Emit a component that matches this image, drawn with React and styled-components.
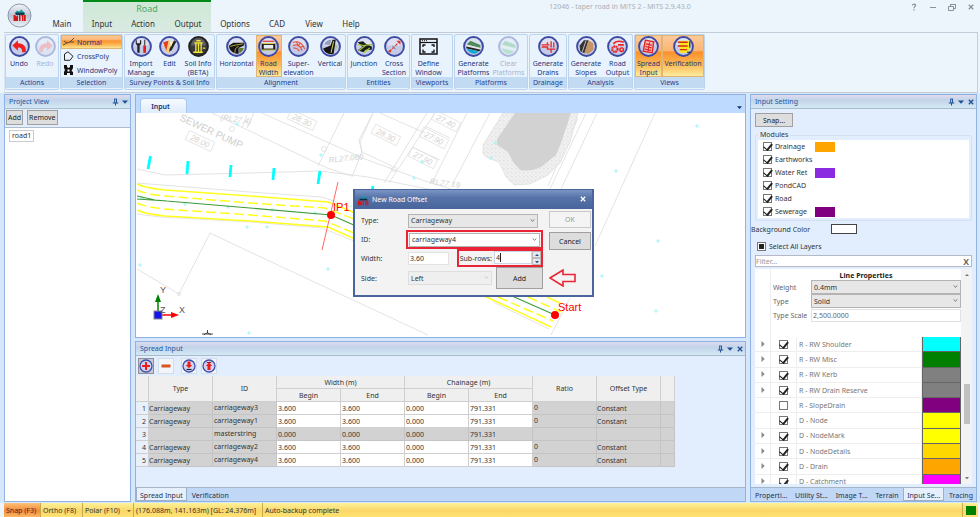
import React, { useState } from 'react';
import styled, { createGlobalStyle, css } from 'styled-components';

const GlobalStyle = createGlobalStyle`
  * {
    box-sizing: border-box;
  }
  body {
    margin: 0;
    font-family: 'Noto Sans', 'Open Sans', sans-serif;
    font-size: 7px;
    line-height: 9px;
    color: #333;
    background: #ecf4fc;
  }
  button, input, select {
    font: inherit;
    color: inherit;
    margin: 0;
    padding: 0;
    border-radius: 0;
    outline: none;
  }
  button {
    border: none;
    background: none;
  }
`;

const Page = styled.div`
  display: flex;
  flex-direction: column;
  height: 100vh;
  overflow: hidden;
`;

/* ---------- header ---------- */

const Header = styled.header`
  display: flex;
  align-items: flex-end;
  height: 32px;
  flex: none;
`;

const LogoButton = styled.button`
  width: 41px;
  height: 30px;
  padding: 1px 0 0 7px;
  align-self: flex-start;
  text-align: left;
  line-height: 0;
`;

const MenuTab = styled.button`
  width: ${p => p.$w}px;
  height: 17px;
  font-size: 8px;
  line-height: 15px;
  color: #333;
`;

const ContextTabs = styled.div`
  height: 32px;
  border-top: 2px solid #008a17;
  background: linear-gradient(#cfe8d6, #d9eae2);
  display: flex;
  flex-direction: column;
  justify-content: space-between;
`;

const ContextRow = styled.div`
  display: flex;
`;

const ContextTitle = styled.div`
  font-size: 9px;
  line-height: 13px;
  text-align: center;
  color: #4fa866;
`;

const TitleText = styled.div`
  flex: 1;
  align-self: flex-start;
  text-align: center;
  color: #adb0b4;
  line-height: 13px;
`;

const WindowControls = styled.div`
  display: flex;
  align-self: flex-start;
  margin-left: 33px;
`;

const WindowButton = styled.button`
  width: 19px;
  height: 14px;
  line-height: 0;
`;

/* ---------- ribbon ---------- */

const Ribbon = styled.nav`
  flex: none;
  display: flex;
  gap: 1px;
  margin: 0 2px 0 4px;
  padding: 1px 0 2px;
  border: 1px solid #c3ccd8;
  border-left-color: #dbe4ef;
  background: #ecf4fc;
  height: 61px;
`;

const Group = styled.section`
  width: ${p => p.$w}px;
  display: flex;
  flex-direction: column;
  border: 1px solid #bcd4ee;
  border-radius: 2px;
  background: #e9f3fd;
  padding-bottom: 1px;
`;

const GroupBody = styled.div`
  flex: 1;
  display: flex;
  justify-content: ${p => (p.$start ? 'flex-start' : 'center')};
`;

const GroupCaption = styled.div`
  height: 11px;
  line-height: 11px;
  background: #c2dbf3;
  color: #26418f;
  text-align: center;
  white-space: nowrap;
`;

const hot = css`
  background: linear-gradient(#fbcb9c, #fbb573 38%, #f98f2b 40%, #fcb954 70%, #fff0a4);
  box-shadow: inset 0 0 0 1px #dcb577;
`;

const ToolButton = styled.button`
  width: ${p => p.$w}px;
  display: flex;
  flex-direction: column;
  align-items: center;
  color: #24357a;
  white-space: pre;
  padding-top: 1px;
  line-height: 9px;
  opacity: ${p => (p.disabled ? 0.35 : 1)};
  ${p => p.$active && hot}

  svg {
    flex: none;
    margin-bottom: 2px;
  }
`;

const SelectionList = styled.div`
  flex: 1;
  display: flex;
  flex-direction: column;
`;

const SelectionButton = styled.button`
  height: 14px;
  display: flex;
  align-items: center;
  gap: 3px;
  padding-left: 2px;
  color: #24357a;
  ${p => p.$active && hot}
`;

/* ---------- workspace ---------- */

const Workspace = styled.main`
  flex: 1;
  min-height: 0;
  display: grid;
  grid-template-columns: 127px minmax(0, 1fr) 227px;
  gap: 4px;
  padding: 1px 3px 1px 4px;
  background: #d6e7fb;
`;

const Panel = styled.section`
  display: flex;
  flex-direction: column;
  min-height: 0;
  border: 1px solid #8db2e3;
  background: #e2eefe;
`;

const PanelHeader = styled.header`
  flex: none;
  display: flex;
  align-items: center;
  height: 14px;
  padding: 0 0 0 4px;
  color: #2259a5;
  background: linear-gradient(#dcdcf0, #c3d3e9 40%, #d3e9f5);
  border-bottom: 1px solid #a9bccb;

  h2 {
    flex: 1;
    margin: 0;
    font-size: 7px;
    font-weight: normal;
  }
`;

const HeaderButton = styled.button`
  width: 10px;
  height: 12px;
  line-height: 0;
`;

const PlainButton = styled.button`
  height: ${p => p.$h || 15}px;
  padding: 0 ${p => p.$pad || 1}px;
  background: #ddd;
  border: 1px solid #a0a0a0;
  color: #222;

  &:disabled {
    background: #f4f4f4;
    border-color: #c9c9c9;
    color: #999;
  }
`;

const ProjectTools = styled.div`
  display: flex;
  gap: 4px;
  padding: 1px 1px 2px;
  border-bottom: 1px solid #b0bccb;
`;

const ProjectTree = styled.div`
  flex: 1;
  background: #fff;
  padding: 2px 4px;
`;

const TreeItem = styled.span`
  display: inline-block;
  border: 1px solid #ccc;
  padding: 0 2px;
  line-height: 10px;
`;

const Center = styled.div`
  display: grid;
  grid-template-rows: minmax(0, 1fr) 161px;
  gap: 3px;
  min-height: 0;
`;

const DocumentPanel = styled(Panel)`
  background: #bfdaff;
`;

const DocumentTabs = styled.div`
  flex: none;
  display: flex;
  align-items: flex-end;
  justify-content: space-between;
  height: 18px;
  padding: 0 1px 0 4px;
`;

const DocumentTab = styled.button`
  width: 47px;
  height: 15px;
  padding-right: 6px;
  font-weight: 600;
  color: #1d2f74;
  background: linear-gradient(#f6faff, #dfecfc);
  border: 1px solid #a9c6ee;
  border-bottom: none;
  border-radius: 4px 4px 0 0;
`;

const Canvas = styled.div`
  position: relative;
  flex: 1;
  min-height: 0;
  background: #fff;
  overflow: hidden;

  > svg {
    display: block;
    width: 100%;
    height: 100%;
  }
`;

/* ---------- dialog ---------- */

const Dialog = styled.form`
  position: absolute;
  left: 217px;
  top: 76px;
  width: 241px;
  border: 2px solid #48659c;
  border-top-width: 1px;
  background: #f3f3f3;
`;

const DialogTitle = styled.div`
  display: flex;
  align-items: center;
  gap: 3px;
  height: 19px;
  padding: 0 6px 0 2px;
  color: #fff;
  background: linear-gradient(#7b95c6, #5673a8 40%, #47659b);

  span {
    flex: 1;
  }
`;

const DialogBody = styled.div`
  display: grid;
  grid-template-columns: 1fr 42px;
  gap: 6px;
  padding: 2px 1px 6px 6px;
`;

const Fields = styled.div`
  display: grid;
  grid-template-columns: 45px 1fr;
  grid-template-rows: 19px 19px 18px 22px;
  align-items: center;
`;

const Marked = styled.div`
  height: 100%;
  display: flex;
  align-items: center;
  border: 2px solid #ea2434;
  padding: ${p => p.$pad || 0};
`;

const FieldRow = styled.div`
  height: 100%;
  display: flex;
  align-items: center;
  justify-content: space-between;
  padding-left: 2px;
`;

const SelectBox = styled.span`
  position: relative;
  display: block;
  width: ${p => p.$w || '100%'};

  select {
    appearance: none;
    display: block;
    width: 100%;
    height: 14px;
    padding-left: 2px;
    background: ${p => p.$bg || '#e7e7e7'};
    border: 1px solid ${p => p.$line || '#b4b4b4'};
    opacity: 1;
    color: #333;
  }
  svg {
    position: absolute;
    right: 3px;
    top: 4px;
    pointer-events: none;
  }
`;

const TextInput = styled.input`
  width: ${p => p.$w || '100%'};
  height: 13px;
  padding-left: 1px;
  border: 1px solid ${p => p.$line || '#e2e2e2'};
  background: #fff;
`;

const Spinner = styled.div`
  position: relative;
  display: flex;
  flex: 1;
  height: 14px;
  margin-left: 2px;
`;

const Caret = styled.span`
  position: absolute;
  left: 6px;
  top: 2px;
  width: 1px;
  height: 9px;
  background: #222;
`;

const Steps = styled.div`
  display: flex;
  flex-direction: column;
  width: 9px;

  button {
    height: 7px;
    line-height: 0;
    background: #e8e8e8;
    border: 1px solid #bbb;
  }
`;

const DialogActions = styled.div`
  display: flex;
  flex-direction: column;
  gap: 4px;

  svg {
    margin-top: 15px;
  }
`;

/* ---------- spread input ---------- */

const SpreadTools = styled.div`
  display: flex;
  gap: 4px;
  padding: 2px;

  button:nth-child(3) {
    margin-left: 3px;
  }
`;

const SpreadTool = styled.button`
  width: 16px;
  height: 16px;
  line-height: 0;
  border: 1px solid ${p => (p.$active ? '#8e9099' : '#d3dcea')};
  background: ${p => (p.$active ? '#c6cad6' : '#f1f4f9')};
`;

const SpreadTable = styled.table`
  table-layout: fixed;
  width: 539px;
  border-collapse: separate;
  border-spacing: 0;
  margin-bottom: auto;

  tr {
    height: 13px;
  }
  th, td {
    height: 13px;
    padding: 0;
    border-right: 1px solid #cfcfcf;
    border-bottom: 1px solid #cfcfcf;
    overflow: hidden;
    line-height: 9px;
  }
  th {
    font-weight: normal;
    background: #efefef;
  }
  td {
    background: #fff;
    padding-left: 1px;
  }
`;

const LockedCell = styled.td`
  && {
    background: #d2d2d2;
    border-color: #c4c4c4;
    padding-left: ${p => (p.$flush ? 0 : 1)}px;
    padding-bottom: ${p => (p.$raised ? 2 : 0)}px;
  }
`;

const RowNumber = styled.th`
  && {
    background: #e8f0fb;
    text-align: right;
    padding-right: 2px;
  }
`;

const BottomTabs = styled.div`
  flex: none;
  display: flex;
  height: 14px;
  padding-left: ${p => p.$pad || 0}px;
  background: #c1d7f6;
  border-top: 1px solid #a5b4c6;
  justify-content: ${p => (p.$spread ? 'space-between' : 'flex-start')};
`;

const BottomTab = styled.button`
  padding: 2px ${p => p.$pad || 3}px 0;
  color: #26324f;
  white-space: nowrap;
  ${p => p.$active && css`
    background: #e6effc;
    border: 1px solid #9db0c8;
    border-top: none;
  `}
`;

/* ---------- input setting ---------- */

const SettingBody = styled.div`
  flex: 1;
  min-height: 0;
  display: flex;
  flex-direction: column;
  padding: 4px 4px 3px;
`;

const Modules = styled.fieldset`
  min-width: 0;
  margin: 3px 0 0;
  padding: 0 2px 2px;
  border: 1px solid #d3e0f2;
  border-radius: 2px;

  legend {
    padding: 0 2px;
    line-height: 10px;
  }
`;

const ModuleList = styled.div`
  background: #fff;
  padding-left: 5px;
`;

const ModuleRow = styled.div`
  display: flex;
  align-items: center;
  height: 13px;

  label {
    width: 52px;
    display: flex;
    align-items: center;
    gap: 3px;
  }
`;

const Swatch = styled.span`
  width: 20px;
  height: 10px;
  background: ${p => p.$color};
`;

const CheckInput = styled.input`
  appearance: none;
  flex: none;
  display: inline-block;
  vertical-align: middle;
  width: 9px;
  height: 9px;
  border: 1px solid #777;
  background: #fff;
  position: relative;

  &:checked::after {
    content: '';
    position: absolute;
    left: 1px;
    top: -1px;
    width: 4px;
    height: 7px;
    border: solid #222;
    border-width: 0 2px 1px 0;
    transform: rotate(40deg);
  }
  &[data-mixed='true']::after {
    content: '';
    position: absolute;
    inset: 1px;
    background: #222;
  }
`;

const BackgroundRow = styled.div`
  display: flex;
  align-items: center;
  height: 16px;
  margin-left: -4px;

  label {
    width: 80px;
  }
  input {
    appearance: none;
    width: 26px;
    height: 10px;
    border: 1px solid #444;
    background: #fff;
  }
  input::-webkit-color-swatch-wrapper {
    padding: 0;
  }
  input::-webkit-color-swatch {
    border: none;
    border-radius: 0;
  }
`;

const SelectAll = styled.label`
  display: flex;
  align-items: center;
  gap: 3px;
  height: 18px;
  padding-left: 2px;
`;

const FilterBox = styled.div`
  display: flex;
  align-items: center;
  flex: none;
  height: 12px;
  border: 1px solid #b3bac4;
  background: #fff;
  margin-bottom: 2px;

  input {
    flex: 1;
    min-width: 0;
    height: 10px;
    border: none;
    background: none;
  }
  input::placeholder {
    color: #999;
  }
  button {
    width: 10px;
    font-size: 9px;
    font-weight: 600;
    color: #555;
  }
`;

const LayerBox = styled.div`
  flex: 1;
  min-height: 0;
  display: flex;
  background: #fff;
  overflow: hidden;
`;

const LayerContent = styled.div`
  flex: 1;
`;

const LineProperties = styled.div`
  margin-left: 15px;
  padding-left: 2px;
  border-left: 1px solid #eee;
  display: grid;
  grid-template-columns: 38px 1fr;
  grid-template-rows: 11px 14px 14px 15px 14px;
  align-items: center;
  color: #666;

  h3 {
    grid-column: 1 / 3;
    margin: 0;
    font-size: 7px;
    line-height: 9px;
    text-align: center;
    padding: 1px 2px 0 0;
    color: #222;
  }
`;

const LayerTable = styled.table`
  table-layout: fixed;
  width: 100%;
  height: 153px;
  border-collapse: separate;
  border-spacing: 0;
  color: #777;

  td {
    padding: 0;
    border-right: 1px solid #eee;
    border-bottom: 1px solid #eee;
    text-align: center;
    line-height: 9px;
  }
  td:nth-child(3) {
    text-align: left;
    padding-left: 2px;
  }
`;

const ColorCell = styled.td`
  && {
    background: ${p => p.$color};
    border: 1px solid #666;
    border-top: none;
  }
`;

const ScrollBar = styled.div`
  width: 11px;
  background: #f3f3f3;
  display: flex;
  flex-direction: column;
  align-items: center;
  justify-content: space-between;
  padding: 4px 0;
`;

const Thumb = styled.div`
  width: 6px;
  height: 40px;
  margin-top: 107px;
  margin-bottom: auto;
  background: #c1c1c1;
`;

/* ---------- status bar ---------- */

const StatusBar = styled.footer`
  flex: none;
  display: flex;
  align-items: stretch;
  height: 14px;
  margin-left: 4px;
  margin-right: 2px;
  background: linear-gradient(#fdf29a, #fbd768 55%, #fde373);
`;

const StatusItem = styled.span`
  display: flex;
  align-items: center;
  justify-content: space-between;
  width: ${p => p.$w}px;
  padding: 1px 2px 0;
  white-space: nowrap;
  border-right: 1px solid #c9a94e;
  ${p => p.$active && css`
    background: linear-gradient(#fbc27c, #f58a35 55%, #fbb869);
  `}
  ${p => p.$grow && css`
    flex: 1;
  `}
`;

const StatusLight = styled.span`
  width: 10px;
  height: 9px;
  margin: 3px 2px 2px 3px;
  background: #008000;
`;

/* ---------- icons ---------- */

const GLYPHS = {
  undo: (
    <path d="M3.200 9 8.500 4v2.800c5 0 8 2.700 7.600 8.700h-3.600c.1-3.200-1-4.500-4-4.500v3z" fill="#f02020" />
  ),
  redo: (
    <path d="M16.800 9 11.500 4v2.800c-5 0-8 2.700-7.600 8.700h3.600c-.1-3.200 1-4.500 4-4.500v3z" fill="#f06060" />
  ),
  import: (
    <g>
      <path d="M4.500 4v3.500L6 9v7h2.200V9l1.500-1.500V4H8.500v3h-3V4z" fill="#222" />
      <path d="M13 9v7" stroke="#e01e1e" strokeWidth="2.600" />
      <path d="M13 3.500V9" stroke="#555" strokeWidth="1.300" />
    </g>
  ),
  edit: (
    <g>
      <path d="m3.500 7 6-3 4 2-4 10.500-2-1z" fill="#f6cf73" />
      <path d="M4 6 9 4.500 7 14z" fill="#e83a2a" />
      <path d="m14.500 4 2 1.500-4.500 8-2.300 1.500.4-2.800z" fill="#222" />
      <path d="m10 5 3 1-1.500 4z" fill="#fff4d8" />
    </g>
  ),
  soil: (
    <g stroke="#f2e63a" fill="none" strokeWidth="1.300">
      <path d="M6 6.500h8M5 15.500h9M8 4.500h4M7.500 7v8.500M12.500 7v8.500M10 7v8M14 11.500h2.500" />
    </g>
  ),
  horizontal: (
    <g>
      <path d="M3 9 7 6.500 17 6.500V9l-5 2.500V17c-4 .3-8-2.500-9-6z" fill="#151515" />
      <path d="M4 10c4-1.500 7-1.500 12-2.500M8.500 16c0-4 1-5 3.500-6" stroke="#e6e04a" strokeWidth=".7" fill="none" />
      <path d="M12.500 11.500h4.300c-.5 2.500-2 4-4.300 5z" fill="#5e7b2a" />
    </g>
  ),
  width: (
    <g>
      <path d="M3.500 7h13v6.500h-13z" fill="#1a1a1a" />
      <path d="M5.500 8.500h9v3.500h-9z" fill="#e8eaf4" />
      <path d="M4 7.200h12M4 13.300h12" stroke="#f0e840" strokeWidth=".8" />
      <path d="M4.500 5h11" stroke="#e02020" strokeWidth="1" />
    </g>
  ),
  super: (
    <g stroke="#e8503c" fill="none" strokeWidth="1">
      <path d="M4.500 6.500c5-2.500 9 0 11.500 6M4.500 9c4-1.500 7 0 9 5M5 11.500c3-.5 4.500 .5 6 3M8 5.500l1.500 3M11.500 6.500 9.500 10M14.500 9.500l-3 1.500" />
    </g>
  ),
  vertical: (
    <g>
      <path d="M3 12 10 9l2-5.500h3L13 17c-4 1-8.500-.5-10-5z" fill="#161616" />
      <path d="m13 5-2.500 11" stroke="#e7df4c" strokeWidth=".9" />
      <path d="m14.500 6 2.500 4-3 5.500z" fill="#b7bea8" />
      <path d="M4 8c1-3 4-4.500 7-4.500L9.500 8.500z" fill="#93a0b8" />
    </g>
  ),
  junction: (
    <g>
      <path d="m3.500 6 5-1 3 2.500L17 10v3l-6 0-2 2.500-5.500-2L8 10.500z" fill="#1b1b1b" />
      <path d="M3.500 8 9 9l8-1M4.500 14l7-5.500M9 16l6-4.500" stroke="#9dc92b" strokeWidth="1.100" fill="none" />
    </g>
  ),
  cross: (
    <g>
      <path d="m5 15 9.500-9.500" stroke="#e03a2a" strokeWidth="1.100" strokeDasharray="3 1" />
      <circle cx="5.500" cy="14.500" r="1.200" fill="#e03a2a" />
      <path d="M11.800 4.500h3.900v3.900z" fill="#e03a2a" />
      <path d="m8 9.500 3 3" stroke="#8b8b8b" />
    </g>
  ),
  platforms: (
    <g>
      <path d="M3.500 8 7 4.500l9.500 4v3z" fill="#4c8c59" />
      <path d="m3 8 14 3.500v1.500L3 10z" fill="#e6e6e6" />
      <path d="m3 10 14 3-1.500 1.500L3.500 12z" fill="#222" />
      <path d="m3.700 12 11.500 2.700-2.500 1.800c-4 1-8-.5-9-4.500z" fill="#12a8d6" />
    </g>
  ),
  clear: (
    <g>
      <path d="M3.500 8 7 4.500l9.500 4v3z" fill="#4cb069" />
      <path d="m3 8.500 14 3.500v2l-14-3z" fill="#d9eedc" />
      <path d="m3.700 12 11.500 2.700-2.500 1.800c-4 1-8-.5-9-4.500z" fill="#56c27a" />
    </g>
  ),
  drains: (
    <g stroke="#ee2a2a" fill="none" strokeWidth="1.300">
      <path d="M3.500 8.500H11M3.500 10.500H9v2h7.500M9 6v2.500M12.500 5v6M12.500 12.500V16M15 6v5" />
    </g>
  ),
  slopes: (
    <g>
      <path d="m3.500 9 4-5 4.500 0-4 12.500-4-2z" fill="#333" />
      <path d="m12 4 4.500 3v6l-4.500 4-4-.5z" fill="#c69461" />
      <path d="M9.500 4.500 6 15" stroke="#ddd" strokeWidth=".8" />
    </g>
  ),
  output: (
    <g fill="none" stroke="#ee2020">
      <circle cx="7.500" cy="12.500" r="2.600" strokeWidth="2" strokeDasharray="1.600 .5" />
      <circle cx="14" cy="13" r="1.700" strokeWidth="1.400" />
      <path d="M6 7.500C8 5 12 4.500 16 6M10.500 8.500h5.500" strokeWidth="1.600" />
    </g>
  ),
  spread: (
    <g>
      <path d="m7 4 8 1.500L13.500 16 5 14.500z" fill="#f6b6b6" stroke="#e02424" strokeWidth="1.300" />
      <path d="m7.500 7.500 6 1.300M7 10l6 1.300M6.500 12.500l6 1.200M11 6l-1.500 9" stroke="#e02424" />
    </g>
  ),
  verify: (
    <g>
      <path d="M6 4.500h10v8L13.500 16H6z" fill="#f7e71d" />
      <path d="M4.500 6h9.500M4.500 9.500h9.500M6.500 13h7" stroke="#d92a1a" strokeWidth="1.300" />
      <path d="M16 5v6M13.500 15.500h3" stroke="#111" />
    </g>
  ),
};

function RoundIcon({ name }) {
  const dark = name === 'soil';
  return (
    <svg width="21" height="21" viewBox="0 0 20 20" aria-hidden="true">
      <circle cx="10" cy="10" r="9" fill={dark ? '#3a3a3a' : '#c5cbe6'} stroke={dark ? '#222' : '#3c4aa4'} strokeWidth="1.800" />
      <path d="M3 9a7 7 0 0 1 14 0z" fill="#fff" opacity={dark ? 0.2 : 0.4} />
      {GLYPHS[name]}
    </svg>
  );
}

const WindowIcon = () => (
  <svg width="21" height="21" viewBox="0 0 21 21" fill="none" stroke="#111" aria-hidden="true">
    <path d="M2 3h17v15H2z" strokeWidth="1.500" />
    <path d="M2 6.500h17" strokeWidth="1.200" />
    <path d="M4 4.700h1M6 4.700h1M8 4.700h1" />
    <path d="M5 11V9h2.500M13.500 9H16v2M16 13.500V16h-2.500M7.500 16H5v-2.500" strokeWidth="1.300" />
  </svg>
);

const MitsMark = ({ size }) => (
  <svg width={size} height={size} viewBox="0 0 14 14" aria-hidden="true">
    <path d="M2 5.500 4.500 3l2 1L9 2l3.500 3.500z" fill="#1c8fa8" />
    <path d="M3 5.500h9v2H3z" fill="#102c3c" />
    <path d="M1 13V7.500h1.500L4 9l1.500-1.500V13zM6.500 7.500H8V13H6.500zM8.500 7.500h2.200V13H9.500V9zM11.200 8h2v5h-2z" fill="#d81616" />
  </svg>
);

const Logo = () => (
  <svg width="25" height="25" viewBox="0 0 25 25" aria-hidden="true">
    <defs>
      <linearGradient id="orb" x1="0" y1="0" x2="0" y2="1">
        <stop offset="0" stopColor="#f5f6f9" />
        <stop offset=".5" stopColor="#bcc3d2" />
        <stop offset="1" stopColor="#eef2f8" />
      </linearGradient>
    </defs>
    <circle cx="12.500" cy="12.500" r="11.500" fill="url(#orb)" stroke="#8d97aa" />
    <g transform="translate(5.500 5)">
      <path d="M2 5.500 4.500 2.500l2 1L9 1.500l3.500 4z" fill="#1ba3a0" />
      <path d="M3 4.500h9v2.500H3z" fill="#123f55" />
      <path d="M1 13V7h1.500L4 8.500 5.500 7v6zM6.500 7H8v6H6.500zM8.500 7h2.200v6H9.500V8.500zM11.200 7h2v6h-2z" fill="#d81616" />
    </g>
  </svg>
);

const Chevron = ({ color = '#555' }) => (
  <svg width="5" height="5" viewBox="0 0 5 5" fill="none" stroke={color} strokeWidth=".8" aria-hidden="true">
    <path d="m.7 1.500 1.800 1.700 1.800-1.700" />
  </svg>
);

const Triangle = ({ dir = 'down', color = '#1f4f95', size = 6 }) => {
  const d = { down: 'M0 1.500h6L3 4.700z', up: 'M0 4.500h6L3 1.500z', right: 'M1.500 0v6l3.200-3z' }[dir];
  return (
    <svg width={size} height={size} viewBox="0 0 6 6" aria-hidden="true">
      <path d={d} fill={color} />
    </svg>
  );
};

const Pin = () => (
  <svg width="7" height="8" viewBox="0 0 7 8" stroke="#1f4f95" fill="none" aria-hidden="true">
    <path d="M2 1h3M2.500 1v4M4.500 1v4" strokeWidth=".8" />
    <path d="M4.300 1v4M.8 5h5.400M3.500 5v2.500" />
  </svg>
);

const Cross = ({ color = '#1f4f95', size = 6 }) => (
  <svg width={size} height={size} viewBox="0 0 6 6" stroke={color} strokeWidth="1.300" aria-hidden="true">
    <path d="m.8.8 4.400 4.400M5.200.8.8 5.200" />
  </svg>
);

function HeaderTools({ closable = true }) {
  return (
    <>
      <HeaderButton type="button" aria-label="Pin"><Pin /></HeaderButton>
      <HeaderButton type="button" aria-label="Options"><Triangle /></HeaderButton>
      {closable && <HeaderButton type="button" aria-label="Close"><Cross /></HeaderButton>}
    </>
  );
}

/* ---------- data ---------- */

const ribbonGroups = [
  { title: 'Selection', w: 63 },
  { title: 'Survey Points & Soil Info', w: 91, tools: [
    ['import', 'Import\nManage', 31], ['edit', 'Edit', 26], ['soil', 'Soil Info\n(BETA)', 31],
  ] },
  { title: 'Alignment', w: 130, tools: [
    ['horizontal', 'Horizontal', 38], ['width', 'Road\nWidth', 26, 'active'], ['super', 'Super-\nelevation', 34], ['vertical', 'Vertical', 29],
  ] },
  { title: 'Entities', w: 63, tools: [['junction', 'Junction', 31], ['cross', 'Cross\nSection', 29]] },
  { title: 'Viewports', w: 42, start: true, tools: [['window', 'Define\nWindow', 33]] },
  { title: 'Platforms', w: 74, tools: [['platforms', 'Generate\nPlatforms', 35], ['clear', 'Clear\nPlatforms', 35, 'disabled']] },
  { title: 'Drainage', w: 38, tools: [['drains', 'Generate\nDrains', 36]] },
  { title: 'Analysis', w: 65, tools: [['slopes', 'Generate\nSlopes', 34], ['output', 'Road\nOutput', 29]] },
  { title: 'Views', w: 71, tools: [['spread', 'Spread\nInput', 27, 'active'], ['verify', 'Verification', 42, 'active']] },
];

const spreadRows = [
  ['Carriageway', 'carriageway3', '3.600', '3.600', '0.000', '791.331', '0', 'Constant'],
  ['Carriageway', 'carriageway1', '3.600', '3.600', '0.000', '791.331', '0', 'Constant'],
  ['', 'masterstring', '0.000', '0.000', '0.000', '791.331', '', ''],
  ['Carriageway', 'carriageway2', '3.600', '3.600', '0.000', '791.331', '0', 'Constant'],
  ['Carriageway', 'carriageway4', '3.600', '3.600', '0.000', '791.331', '0', 'Constant'],
];

const modules = [
  ['Drainage', '#ffa500'],
  ['Earthworks'],
  ['Water Ret', '#8a2be2'],
  ['PondCAD'],
  ['Road'],
  ['Sewerage', '#800080'],
];

const layers = [
  { name: 'R - RW Shoulder', color: '#00ffff', open: true, on: true },
  { name: 'R - RW Misc', color: '#008000', open: true, on: true },
  { name: 'R - RW Kerb', color: '#808080', open: true, on: true },
  { name: 'R - RW Drain Reserve', color: '#808080', open: true, on: true },
  { name: 'R - SlopeDrain', color: '#800080', open: false, on: false },
  { name: 'D - Node', color: '#ffff00', open: false, on: true },
  { name: 'D - NodeMark', color: '#ffff00', open: true, on: true },
  { name: 'D - NodeDetails', color: '#ffd700', open: true, on: true },
  { name: 'D - Drain', color: '#ffa500', open: true, on: true },
  { name: 'D - Catchment', color: '#ff00ff', open: true, on: true },
];

const stations = [
  [237, 124], [491, 158], [495, 143], [697, 126], [616, 171], [658, 241], [602, 276], [656, 311],
  [247, 227], [267, 227], [140, 265], [328, 269], [249, 333], [321, 155], [422, 162], [414, 178],
  [142, 198], [185, 204], [228, 207], [272, 210], [315, 213],
];

/* ---------- drawing ---------- */

function PlotLabel({ x, y, angle, children, boxed = true }) {
  return (
    <g transform={`translate(${x} ${y}) rotate(${angle})`}>
      {boxed && <rect x="-14" y="-5" width="28" height="10" fill="none" stroke="#e2e2e2" strokeWidth=".8" />}
      <text y="3" fontSize="8" textAnchor="middle" fontStyle="italic" fill="#d2d2d2">{children}</text>
    </g>
  );
}

function RoadPlan() {
  return (
    <svg viewBox="136 113 609 224" preserveAspectRatio="xMinYMin slice" fontFamily="Liberation Sans, sans-serif">
      <defs>
        <pattern id="bank" width="4" height="4" patternUnits="userSpaceOnUse">
          <rect width="4" height="4" fill="#f0f0f0" />
          <path d="M0 1h1M2 3h1M3 0l1 1" stroke="#dadada" strokeWidth=".7" />
        </pattern>
      </defs>

      <g fill="none" stroke="#dcdcdc" strokeWidth=".8">
        <path d="M137 169l28 6 85-2 70-2 48 6 90 18" />
        <path d="M137 183l113 9 72 5 30 10" />
        <path d="M137 214l23 3 90 5 72 6 32 13" />
        <path d="M137 269l42 25 31-61 40 19 178 83" />
        <path d="M212 113l115 55 25 8M262 113l103 46 60 22 32 10" />
        <path d="M344 113l-26 53M247 128l7-15M242 128l5-13" />
        <path d="M373 113l-13 29 2 10-10 25" />
        <path d="M373 113l-14 27 3 12 30 14M427 113l-43 70M435 113l-46 70M467 113l-35 70" />
        <path d="M490 113l-38 72M380 113l45 20M425 126l25 12M412 147l28 13" />
        <path d="M597 113l-36 76M586 113l-36 76M655 113l-60 133M578 118l-30 68" />
        <path d="M551 335l19-37M493 302l56 27" />
        <circle cx="232" cy="129" r="2.500" />
        <circle cx="324" cy="149" r="2.500" />
        <circle cx="394" cy="169" r="2.500" />
        <circle cx="179" cy="294" r="1.500" />
      </g>

      <text transform="translate(179 120) rotate(25)" fontSize="10" fill="#cfcfcf">SEWER PUMP</text>
      <PlotLabel x={200} y={141} angle={25}>28.00</PlotLabel>
      <PlotLabel x={302} y={120} angle={25}>28.30</PlotLabel>
      <PlotLabel x={386} y={135} angle={27}>28.30</PlotLabel>
      <PlotLabel x={434} y={138} angle={27}>27.90</PlotLabel>
      <PlotLabel x={423} y={158} angle={27}>27.90</PlotLabel>
      <PlotLabel x={446} y={121} angle={27}>27.40</PlotLabel>
      <PlotLabel x={236} y={119} angle={8} boxed={false}>(RL27.4)</PlotLabel>
      <PlotLabel x={346} y={158} angle={-6} boxed={false}>RL27.080</PlotLabel>
      <PlotLabel x={445} y={183} angle={8} boxed={false}>RL27.19</PlotLabel>

      <path d="M503 113l-20 32 0 9 5 4 11 4 7 15 8 8 16-1 18-9 12-12 10-21 8-29z" fill="url(#bank)" stroke="#d9d9d9" strokeWidth=".6" />
      <path d="M515 113h56l-10 30-5 12-15 12q-10 5-21 3l-7-8-5-10-11-7 0-6z" fill="#d2d2d2" />

      <g stroke="#9ff5f5" strokeWidth=".9">
        {stations.map(([x, y]) => (
          <path key={`${x}-${y}`} d={`M${x - 2} ${y}h4M${x} ${y - 2}v4`} />
        ))}
      </g>

      <path
        d="M150.500 156l-2.500 13M188 161l-1 13M231 165l-1 12M274 168l-1 12M320 171l-2 13M373 186l-1 6"
        stroke="#0ff"
        strokeWidth="2.800"
      />

      <g fill="none" stroke="#ffff1e" strokeWidth="1.500">
        <path d="M137 184q8 4 28 6l85 6 78 6 27 11" />
        <path d="M137 210q8 4 28 6l85 5 78 6 27 12" />
        <path d="M480 294l71 33M547 297l15 7" />
        <g strokeDasharray="10 4">
          <path d="M137 190q8 4 28 6l85 7 75 5 29 11" />
          <path d="M137 203q8 4 28 6l85 6 75 6 29 12" />
          <path d="M498 297l55 24M528 297l33 15" />
        </g>
      </g>
      <path d="M137 196l18 4 95 8 81 7 25 11M137 199l30 2M512 296l43 19" fill="none" stroke="#3c9a3c" strokeWidth="1.100" />
      <path d="M338 182l-16 68" stroke="#f55" strokeWidth=".9" />
      <g fill="#f00">
        <circle cx="331" cy="215" r="4" />
        <circle cx="555" cy="315" r="4" />
        <text x="333" y="211" fontSize="11">IP1</text>
        <text x="558" y="311" fontSize="11">Start</text>
      </g>

      <path d="M158 314v-13" stroke="#008000" strokeWidth="1.500" />
      <path d="M158 294l-3 8h6z" fill="#008000" />
      <path d="M160 315h12" stroke="#f00" strokeWidth="1.500" />
      <path d="M179 315l-8-3v6z" fill="#f00" />
      <rect x="154" y="311" width="8" height="8" fill="#1414f0" stroke="#888" />
      <g fontSize="9" fill="#555">
        <text x="160" y="293">Y</text>
        <text x="160" y="313">Z</text>
        <text x="179" y="313">X</text>
      </g>
      <path d="M207.500 330v3M204 335q3-4 7 0M202 334h11" stroke="#333" strokeWidth=".9" fill="none" />
    </svg>
  );
}

function NewRoadOffset() {
  const [width, setWidth] = useState('3.60');
  const [rows, setRows] = useState('4');
  return (
    <Dialog onSubmit={e => e.preventDefault()}>
      <DialogTitle>
        <MitsMark size={12} />
        <span>New Road Offset</span>
        <button type="button" aria-label="Close"><Cross color="#fff" /></button>
      </DialogTitle>
      <DialogBody>
        <Fields>
          <label htmlFor="type">Type:</label>
          <FieldRow>
            <SelectBox $w="130px">
              <select id="type"><option>Carriageway</option></select>
              <Chevron />
            </SelectBox>
          </FieldRow>
          <label htmlFor="offset-id">ID:</label>
          <Marked $pad="1px">
            <SelectBox $bg="#fff">
              <select id="offset-id"><option>carriageway4</option></select>
              <Chevron />
            </SelectBox>
          </Marked>
          <label htmlFor="width">Width:</label>
          <FieldRow>
            <TextInput id="width" $w="41px" value={width} onChange={e => setWidth(e.target.value)} />
            <Marked $pad="0 0 0 1px">
              <label htmlFor="rows">Sub-rows:</label>
              <Spinner>
                <TextInput id="rows" $w="38px" $line="#c9d6e8" value={rows} onChange={e => setRows(e.target.value)} />
                {rows === '4' && <Caret />}
                <Steps>
                  <button type="button" aria-label="More" onClick={() => setRows(String(+rows + 1))}><Triangle dir="up" size={4} /></button>
                  <button type="button" aria-label="Fewer" onClick={() => setRows(String(+rows - 1))}><Triangle size={4} /></button>
                </Steps>
              </Spinner>
            </Marked>
          </FieldRow>
          <label htmlFor="side">Side:</label>
          <FieldRow>
            <SelectBox $w="84px" $bg="#efefef" $line="#dedede">
              <select id="side" disabled><option>Left</option></select>
              <Chevron color="#bbb" />
            </SelectBox>
            <PlainButton type="submit" $h={22} $pad={16}>Add</PlainButton>
          </FieldRow>
        </Fields>
        <DialogActions>
          <PlainButton type="button" $h={17} disabled>OK</PlainButton>
          <PlainButton type="button" $h={18}>Cancel</PlainButton>
          <svg width="28" height="18" viewBox="0 0 28 18" fill="none" stroke="#ea2434" strokeWidth="1.600" aria-hidden="true">
            <path d="M1 9l13-8v4.500h12v7H14V17z" />
          </svg>
        </DialogActions>
      </DialogBody>
    </Dialog>
  );
}

function SpreadInput() {
  return (
    <Panel>
      <PanelHeader>
        <h2>Spread Input</h2>
        <HeaderTools />
      </PanelHeader>
      <SpreadTools>
        <SpreadTool $active aria-label="Add row">
          <svg width="14" height="14" viewBox="0 0 14 14">
            <circle cx="7" cy="7" r="6" fill="#cfd5ee" stroke="#3f4fae" strokeWidth="1.300" />
            <path d="M7 3v8M3 7h8" stroke="#ee1c1c" strokeWidth="2" />
          </svg>
        </SpreadTool>
        <SpreadTool aria-label="Remove row">
          <svg width="14" height="14" viewBox="0 0 14 14">
            <path d="M2.500 5.500h9v3h-9z" fill="#d9541e" />
          </svg>
        </SpreadTool>
        <SpreadTool aria-label="Import rows">
          <svg width="14" height="14" viewBox="0 0 14 14">
            <circle cx="7" cy="7" r="6" fill="#cfd5ee" stroke="#3f4fae" strokeWidth="1.300" />
            <path d="M5.500 2.500h3V6h1.700L7 9.300 3.800 6h1.700z" fill="#ee1c1c" />
            <path d="M4.500 10.500h5" stroke="#222" strokeWidth="1.200" />
          </svg>
        </SpreadTool>
        <SpreadTool aria-label="Export rows">
          <svg width="14" height="14" viewBox="0 0 14 14">
            <circle cx="7" cy="7" r="6" fill="#cfd5ee" stroke="#3f4fae" strokeWidth="1.300" />
            <path d="M5.500 11h3V7h1.700L7 3.500 3.800 7h1.700z" fill="#ee1c1c" />
            <path d="M4.800 3.500h4.400" stroke="#a11" />
          </svg>
        </SpreadTool>
      </SpreadTools>
      <SpreadTable>
        <colgroup>
          <col width="13" />
          {[0, 1, 2, 3, 4, 5, 6, 7].map(i => <col key={i} width="64" />)}
          <col />
        </colgroup>
        <thead>
          <tr>
            <th rowSpan={2} />
            <th rowSpan={2}>Type</th>
            <th rowSpan={2}>ID</th>
            <th colSpan={2}>Width (m)</th>
            <th colSpan={2}>Chainage (m)</th>
            <th rowSpan={2}>Ratio</th>
            <th rowSpan={2}>Offset Type</th>
            <th rowSpan={2} />
          </tr>
          <tr>
            <th>Begin</th>
            <th>End</th>
            <th>Begin</th>
            <th>End</th>
          </tr>
        </thead>
        <tbody>
          {spreadRows.map((row, i) => {
            const Value = row[0] ? 'td' : LockedCell;
            return (
              <tr key={row[1]}>
                <RowNumber>{i + 1}</RowNumber>
                <LockedCell $flush>{row[0]}</LockedCell>
                <LockedCell $raised>{row[1]}</LockedCell>
                <Value>{row[2]}</Value>
                <Value>{row[3]}</Value>
                <Value>{row[4]}</Value>
                <Value>{row[5]}</Value>
                <LockedCell $raised>{row[6]}</LockedCell>
                <LockedCell $flush>{row[7]}</LockedCell>
                <LockedCell />
              </tr>
            );
          })}
        </tbody>
      </SpreadTable>
      <BottomTabs>
        <BottomTab $active>Spread Input</BottomTab>
        <BottomTab $pad={5}>Verification</BottomTab>
      </BottomTabs>
    </Panel>
  );
}

function InputSetting() {
  return (
    <Panel>
      <PanelHeader>
        <h2>Input Setting</h2>
        <HeaderTools />
      </PanelHeader>
      <SettingBody>
        <div>
          <PlainButton $h={14} $pad={7}>Snap...</PlainButton>
        </div>
        <Modules>
          <legend>Modules</legend>
          <ModuleList>
            {modules.map(([name, color]) => (
              <ModuleRow key={name}>
                <label>
                  <CheckInput type="checkbox" defaultChecked />
                  {name}
                </label>
                {color && <Swatch $color={color} />}
              </ModuleRow>
            ))}
          </ModuleList>
        </Modules>
        <BackgroundRow>
          <label htmlFor="background">Background Color</label>
          <input id="background" type="color" defaultValue="#ffffff" />
        </BackgroundRow>
        <SelectAll>
          <CheckInput type="checkbox" data-mixed="true" />
          Select All Layers
        </SelectAll>
        <FilterBox>
          <input placeholder="Filter..." aria-label="Filter layers" />
          <button aria-label="Clear filter">X</button>
        </FilterBox>
        <LayerBox>
          <LayerContent>
            <LineProperties>
              <h3>Line Properties</h3>
              <label htmlFor="weight">Weight</label>
              <SelectBox>
                <select id="weight"><option>0.4mm</option></select>
                <Chevron />
              </SelectBox>
              <label htmlFor="line-type">Type</label>
              <SelectBox>
                <select id="line-type"><option>Solid</option></select>
                <Chevron />
              </SelectBox>
              <label htmlFor="scale">Type Scale</label>
              <TextInput id="scale" defaultValue="2,500.0000" />
            </LineProperties>
            <LayerTable>
              <colgroup>
                <col width="16" />
                <col width="26" />
                <col />
                <col width="39" />
              </colgroup>
              <tbody>
                {layers.map(layer => (
                  <tr key={layer.name}>
                    <td>{layer.open && <Triangle dir="right" color="#888" />}</td>
                    <td><CheckInput type="checkbox" defaultChecked={layer.on} aria-label={layer.name} /></td>
                    <td>{layer.name}</td>
                    <ColorCell $color={layer.color} />
                  </tr>
                ))}
              </tbody>
            </LayerTable>
          </LayerContent>
          <ScrollBar>
            <Triangle dir="up" color="#777" size={4} />
            <Thumb />
            <Triangle color="#777" size={4} />
          </ScrollBar>
        </LayerBox>
      </SettingBody>
      <BottomTabs $pad={1} $spread>
        <BottomTab>Properti...</BottomTab>
        <BottomTab>Utility St...</BottomTab>
        <BottomTab>Image T...</BottomTab>
        <BottomTab>Terrain</BottomTab>
        <BottomTab $active>Input Se...</BottomTab>
        <BottomTab>Tracing</BottomTab>
      </BottomTabs>
    </Panel>
  );
}

function Tool({ icon, label, w, state }) {
  return (
    <ToolButton $w={w} $active={state === 'active'} disabled={state === 'disabled'}>
      {icon === 'window' ? <WindowIcon /> : <RoundIcon name={icon} />}
      {label}
    </ToolButton>
  );
}

function SelectionTools() {
  return (
    <SelectionList>
      <SelectionButton $active>
        <svg width="11" height="10" viewBox="0 0 11 10" fill="none" stroke="#333">
          <path d="M0 8l4-2 3-1 4-4M1 4l3 2M7 5h4" strokeWidth=".8" />
        </svg>
        Normal
      </SelectionButton>
      <SelectionButton>
        <svg width="11" height="10" viewBox="0 0 11 10" fill="none" stroke="#222">
          <path d="M1.500 9.300V3L5 .8l5 4.500-3 4z" />
        </svg>
        CrossPoly
      </SelectionButton>
      <SelectionButton>
        <svg width="11" height="10" viewBox="0 0 11 10" fill="#111">
          <path d="M1 0h3v2l1.500 1L7 2V0h3v3L8.500 6 10 7v3H7V8H4v2H1V7l1-2-1-2z" />
          <path d="M4.500 4.500h2v2h-2z" fill="#fff" />
        </svg>
        WindowPoly
      </SelectionButton>
    </SelectionList>
  );
}

function App() {
  return (
    <Page>
      <GlobalStyle />
      <Header>
        <LogoButton aria-label="Application menu"><Logo /></LogoButton>
        <MenuTab $w={42}>Main</MenuTab>
        <ContextTabs>
          <ContextTitle>Road</ContextTitle>
          <ContextRow>
            <MenuTab $w={38}>Input</MenuTab>
            <MenuTab $w={44}>Action</MenuTab>
            <MenuTab $w={46}>Output</MenuTab>
          </ContextRow>
        </ContextTabs>
        <MenuTab $w={48}>Options</MenuTab>
        <MenuTab $w={36}>CAD</MenuTab>
        <MenuTab $w={38}>View</MenuTab>
        <MenuTab $w={36}>Help</MenuTab>
        <TitleText>12046 - taper road in MiTS 2 - MiTS 2.9.43.0</TitleText>
        <WindowControls>
          <WindowButton aria-label="Help">
            <svg width="8" height="8" viewBox="0 0 8 8" fill="none" stroke="#8b8f96" strokeWidth="1.200">
              <path d="M2.500 2.500C2.500.5 5.800.7 5.500 2.600 5.300 3.700 4 3.700 4 5.200M4 6.200v1.200" />
            </svg>
          </WindowButton>
          <WindowButton aria-label="Minimize">
            <svg width="8" height="8" viewBox="0 0 8 8" stroke="#8b8f96"><path d="M1 4.500h6" /></svg>
          </WindowButton>
          <WindowButton aria-label="Restore">
            <svg width="8" height="8" viewBox="0 0 8 8" fill="none" stroke="#8b8f96">
              <path d="M.5 3.500h5v4h-5zM2.500 3V1.500h5v4H6M2 1.500h5.500" />
            </svg>
          </WindowButton>
          <WindowButton aria-label="Close"><Cross color="#8b8f96" /></WindowButton>
        </WindowControls>
      </Header>

      <Ribbon>
        <Group $w={54}>
          <GroupBody>
            <Tool icon="undo" label="Undo" w={26} />
            <Tool icon="redo" label="Redo" w={26} state="disabled" />
          </GroupBody>
          <GroupCaption>Actions</GroupCaption>
        </Group>
        {ribbonGroups.map(group => (
          <Group key={group.title} $w={group.w}>
            <GroupBody $start={group.start}>
              {group.tools
                ? group.tools.map(([icon, label, w, state]) => (
                  <Tool key={icon} icon={icon} label={label} w={w} state={state} />
                ))
                : <SelectionTools />}
            </GroupBody>
            <GroupCaption>{group.title}</GroupCaption>
          </Group>
        ))}
      </Ribbon>

      <Workspace>
        <Panel>
          <PanelHeader>
            <h2>Project View</h2>
            <HeaderTools closable={false} />
          </PanelHeader>
          <ProjectTools>
            <PlainButton>Add</PlainButton>
            <PlainButton>Remove</PlainButton>
          </ProjectTools>
          <ProjectTree>
            <TreeItem>road1</TreeItem>
          </ProjectTree>
        </Panel>

        <Center>
          <DocumentPanel>
            <DocumentTabs>
              <DocumentTab>Input</DocumentTab>
              <HeaderButton aria-label="Open documents"><Triangle color="#1d2f74" size={5} /></HeaderButton>
            </DocumentTabs>
            <Canvas>
              <RoadPlan />
              <NewRoadOffset />
            </Canvas>
          </DocumentPanel>
          <SpreadInput />
        </Center>

        <InputSetting />
      </Workspace>

      <StatusBar>
        <StatusItem $active $w={37}>Snap (F3)</StatusItem>
        <StatusItem $w={42}>Ortho (F8)</StatusItem>
        <StatusItem $w={51}>
          Polar (F10)
          <Triangle color="#8a6a20" size={4} />
        </StatusItem>
        <StatusItem $w={129}>(176.088m, 141.163m) [GL: 24.376m]</StatusItem>
        <StatusItem $grow>Auto-backup complete</StatusItem>
        <StatusLight />
      </StatusBar>
    </Page>
  );
}

export default App;
